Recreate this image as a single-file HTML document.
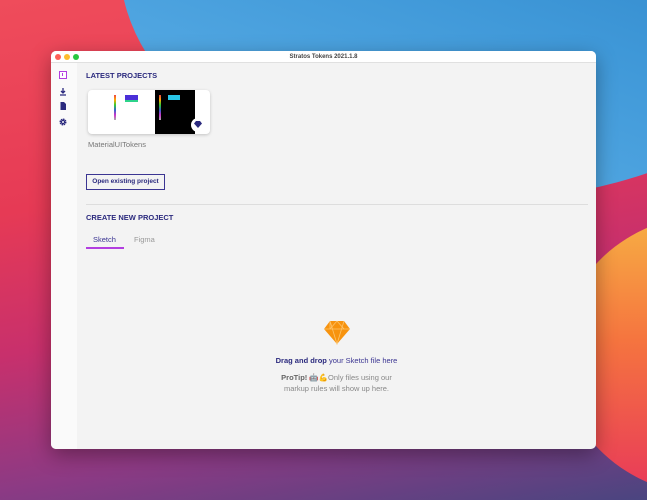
<!DOCTYPE html>
<html><head><style>
*{margin:0;padding:0;box-sizing:border-box}
body{width:647px;height:500px;overflow:hidden;position:relative;font-family:"Liberation Sans",sans-serif;
background:linear-gradient(170deg,#ef4c5b 0%,#e63a55 35%,#c8306c 58%,#8c3a84 80%,#4a4580 100%);}
.blue{position:absolute;left:120px;top:-270px;width:720px;height:470px;border-radius:50%;background:linear-gradient(200deg,#1a6fb5,#3f98d8 55%,#62b4ea)}
.orange{position:absolute;left:560px;top:215px;width:300px;height:280px;border-radius:50%;background:linear-gradient(180deg,#f7b044,#f5743f 45%,#e8385a)}
.win{position:absolute;left:51px;top:51px;width:545px;height:398px;background:#f3f3f3;border-radius:5px;overflow:hidden;box-shadow:0 6px 20px rgba(0,0,0,.35)}
.tb{height:12px;background:#fff;border-bottom:1px solid #e0e0e0;position:relative;font-size:6px;font-weight:bold;color:#444;text-align:center;line-height:12px}
.dot{position:absolute;top:3px;width:6px;height:6px;border-radius:50%}
.side{position:absolute;left:0;top:12px;width:26px;bottom:0;background:#fafafa}
.ic{position:absolute;left:8px;width:8px;height:8px}
h2{position:absolute;font-size:7.5px;font-weight:bold;color:#2b2a7e}
.card{position:absolute;left:37px;top:39px;width:122px;height:44px;background:#fff;border-radius:4px;box-shadow:0 1px 3px rgba(0,0,0,.2);overflow:hidden}
.btn{position:absolute;left:35px;top:123px;width:79px;height:16px;border:1.5px solid #3b3592;color:#2b2a7e;font-size:6.5px;font-weight:bold;text-align:center;line-height:13px}
</style></head><body>
<div class="blue"></div><div class="orange"></div>
<div class="win">
<div class="tb">Stratos Tokens 2021.1.8
<div class="dot" style="left:4px;background:#fe5f57"></div><div class="dot" style="left:13px;background:#febc2e"></div><div class="dot" style="left:22px;background:#28c840"></div></div>
<div class="side">
<div class="ic" style="top:8px;border:1.5px solid #b23ee0;background:#fff"><div style="position:absolute;left:2px;top:1px;width:1px;height:3px;background:#b23ee0"></div></div>
<svg class="ic" style="top:25px" viewBox="0 0 8 8"><path d="M4 0v5M2 3l2 2 2-2M1 7h6" stroke="#2b2a7e" stroke-width="1.3" fill="none"/></svg>
<svg class="ic" style="top:39px" viewBox="0 0 8 8"><path d="M1.5 0h3.5l2 2v6h-5.5z" fill="#2b2a7e"/></svg>
<svg class="ic" style="top:55px" viewBox="0 0 8 8"><circle cx="4" cy="4" r="2.6" fill="none" stroke="#2b2a7e" stroke-width="1.8" stroke-dasharray="1.4 0.6"/><circle cx="4" cy="4" r="2.2" fill="#2b2a7e"/><circle cx="4" cy="4" r="1" fill="#fafafa"/></svg>
</div>
<h2 style="left:35px;top:20px">LATEST PROJECTS</h2>
<div class="card">
<div style="position:absolute;left:67px;top:0;width:40px;height:44px;background:#000"></div>
<div style="position:absolute;left:37px;top:5px;width:13px;height:5px;background:#4b2fd8"></div>
<div style="position:absolute;left:37px;top:10px;width:13px;height:2px;background:#2dd38a"></div>
<div style="position:absolute;left:80px;top:5px;width:12px;height:5px;background:#28c6e8"></div>
<div style="position:absolute;left:26px;top:5px;width:2px;height:25px;background:linear-gradient(#e44,#fa0,#3c3,#36c,#c3c,#aaa)"></div>
<div style="position:absolute;left:71px;top:5px;width:2px;height:25px;background:linear-gradient(#e44,#fa0,#3c3,#36c,#c3c,#aaa)"></div>
<div style="position:absolute;left:103px;top:28px;width:14px;height:14px;border-radius:50%;background:#fff"></div>
<svg style="position:absolute;left:106px;top:31px" width="8" height="7" viewBox="0 0 8 7"><path d="M2 0h4l2 2.5-4 4.5-4-4.5z" fill="#2b2a7e"/></svg>
</div>
<div style="position:absolute;left:37px;top:89px;font-size:7.5px;color:#777">MaterialUITokens</div>
<div class="btn">Open existing project</div>
<div style="position:absolute;left:35px;top:153px;width:502px;height:1px;background:#ddd"></div>
<h2 style="left:35px;top:162px">CREATE NEW PROJECT</h2>
<div style="position:absolute;left:42px;top:184px;font-size:7.5px;color:#3b3592">Sketch</div>
<div style="position:absolute;left:83px;top:184px;font-size:7.5px;color:#999">Figma</div>
<div style="position:absolute;left:35px;top:196px;width:38px;height:2px;background:#b23ee0"></div>
<svg style="position:absolute;left:272px;top:269px" width="28" height="25" viewBox="0 0 28 25"><path d="M7 1h14l6 8-13 15L1 9z" fill="#f7930e"/><path d="M1 9h26M7 1l7 23 7-23M7 1l-0 8M14 1l-7 8M14 1l7 8" stroke="#fdc36a" stroke-width=".8" fill="none"/></svg>
<div style="position:absolute;left:0;width:545px;top:305px;text-align:center;font-size:7.5px;color:#3b3592;padding-left:26px"><b style="color:#2b2a7e">Drag and drop</b> your Sketch file here</div>
<div style="position:absolute;left:0;width:545px;top:321px;text-align:center;font-size:7.5px;color:#888;line-height:11px;padding-left:26px"><b style="color:#666">ProTip!</b> 🤖💪Only files using our<br>markup rules will show up here.</div>
</div>
</body></html>
